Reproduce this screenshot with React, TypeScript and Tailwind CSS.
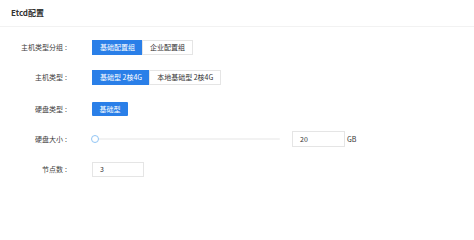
const FONT = { fontFamily: '"Noto Sans CJK SC", "Noto Sans", sans-serif' };

function Label({ text }: { text: string }) {
  return (
    <div className="flex w-[67px] shrink-0 justify-end text-[7px] leading-none text-[#404040]">
      <span>{text}</span>
      <span className="ml-[2px]">:</span>
    </div>
  );
}

function ButtonGroup({ items, active }: { items: string[]; active: number }) {
  return (
    <div className="flex h-[15px]">
      {items.map((item, i) =>
        i === active ? (
          <div
            key={item}
            className="flex items-center border border-[#2a7fe8] bg-[#2a7fe8] px-[7px] text-[7px] leading-none whitespace-nowrap text-white"
          >
            {item}
          </div>
        ) : (
          <div
            key={item}
            className="-ml-px flex items-center border border-[#e5e5e5] bg-white px-[7px] text-[7px] leading-none whitespace-nowrap text-[#333]"
          >
            {item}
          </div>
        )
      )}
    </div>
  );
}

export default function App() {
  return (
    <div className="h-[201px] w-[474px] bg-white" style={FONT}>
      {/* Header */}
      <div className="flex h-[27px] items-center border-b border-[#f2f2f2] pl-[11px]">
        <span className="text-[8px] leading-none font-bold text-[#333]">Etcd配置</span>
      </div>

      {/* Form */}
      <div className="flex flex-col">
        <div className="mt-[13px] flex h-[15px] items-center gap-[25px]">
          <Label text="主机类型分组" />
          <ButtonGroup items={["基础配置组", "企业配置组"]} active={0} />
        </div>

        <div className="mt-[15px] flex h-[15px] items-center gap-[25px]">
          <Label text="主机类型" />
          <ButtonGroup items={["基础型 2核4G", "本地基础型 2核4G"]} active={0} />
        </div>

        <div className="mt-[17px] flex h-[14px] items-center gap-[25px]">
          <Label text="硬盘类型" />
          <div className="flex h-[14px] items-center rounded-[1px] bg-[#2a7fe8] px-[7.5px] text-[7px] leading-none text-white">
            基础型
          </div>
        </div>

        <div className="mt-[15px] flex h-[16px] items-center gap-[25px]">
          <Label text="硬盘大小" />
          <div className="flex items-center">
            <div className="relative flex h-[10px] w-[188px] items-center">
              <div className="h-[2px] w-full rounded-full bg-[#f2f2f2]" />
              <div className="absolute top-[1px] left-[-1px] h-[8px] w-[8px] rounded-full border-[1.5px] border-[#91c5f5] bg-white" />
            </div>
            <div className="ml-[12px] flex h-[16px] w-[53px] items-center border border-[#e5e5e5] px-[7px] text-[7px] leading-none text-[#333]">
              20
            </div>
            <span className="ml-[2px] text-[7px] leading-none text-[#333]">GB</span>
          </div>
        </div>

        <div className="mt-[15px] flex h-[15px] items-center gap-[25px]">
          <Label text="节点数" />
          <div className="flex h-[15px] w-[52px] items-center border border-[#e5e5e5] px-[7px] text-[7px] leading-none text-[#333]">
            3
          </div>
        </div>
      </div>
    </div>
  );
}
